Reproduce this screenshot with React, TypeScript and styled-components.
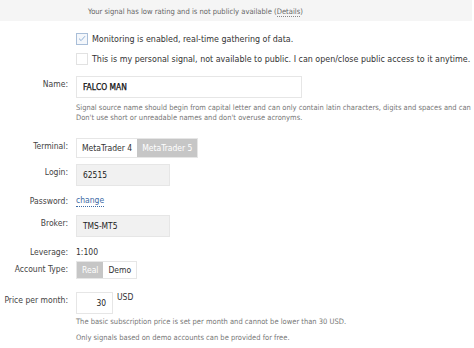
import React from 'react'
import styled, { createGlobalStyle } from 'styled-components'

const GlobalStyle = createGlobalStyle`
  body {
    margin: 0;
    background: #fff;
    font-family: 'DejaVu Sans Condensed', 'DejaVu Sans', sans-serif;
    color: #333;
    overflow: hidden;
  }
`

const App = () => {
  return (
    <>
      <GlobalStyle />
      <Page>
        <Banner>
          Your signal has low rating and is not publicly available (<BannerLink>Details</BannerLink>)
        </Banner>

        <Form>
          <CheckRow>
            <CheckBox $checked>
              <svg width="8" height="7" viewBox="0 0 8 7">
                <path d="M1 3.6 L3.1 5.6 L7 1.2" fill="none" stroke="#8fb0d6" strokeWidth="1" />
              </svg>
            </CheckBox>
            <span>Monitoring is enabled, real-time gathering of data.</span>
          </CheckRow>
          <CheckRow>
            <CheckBox />
            <span>This is my personal signal, not available to public. I can open/close public access to it anytime.</span>
          </CheckRow>

          <Row $top={4}>
            <Label $boxed>Name:</Label>
            <Input $width={226} $strong>FALCO MAN</Input>
          </Row>
          <Hint $top={5}>
            Signal source name should begin from capital letter and can only contain latin characters, digits and spaces and can
            <br />
            Don't use short or unreadable names and don't overuse acronyms.
          </Hint>

          <Row $top={15}>
            <Label $boxed>Terminal:</Label>
            <Toggle>
              <ToggleItem>MetaTrader 4</ToggleItem>
              <ToggleItem $active>MetaTrader 5</ToggleItem>
            </Toggle>
          </Row>

          <Row $top={6}>
            <Label $boxed>Login:</Label>
            <Input $width={94} $disabled>62515</Input>
          </Row>

          <Row $top={9}>
            <Label>Password:</Label>
            <Link>change</Link>
          </Row>

          <Row $top={8}>
            <Label $boxed>Broker:</Label>
            <Input $width={94} $disabled>TMS-MT5</Input>
          </Row>

          <Row $top={9}>
            <Label>Leverage:</Label>
            <Value>1:100</Value>
          </Row>

          <Row $top={3}>
            <Label $boxed>Account Type:</Label>
            <Toggle $height={18}>
              <ToggleItem $active>Real</ToggleItem>
              <ToggleItem>Demo</ToggleItem>
            </Toggle>
          </Row>

          <Row $top={13}>
            <Label $boxed>Price per month:</Label>
            <PriceWrap>
              <Input $width={37} $align="right">30</Input>
              <Currency>USD</Currency>
            </PriceWrap>
          </Row>
          <Hint $top={3}>The basic subscription price is set per month and cannot be lower than 30 USD.</Hint>
          <Hint $top={6}>Only signals based on demo accounts can be provided for free.</Hint>
        </Form>
      </Page>
    </>
  )
}

export default App

// Styled Components

const Page = styled.div`
  width: 474px;
  height: 348px;
  overflow: hidden;
`

const Banner = styled.div`
  width: 472px;
  height: 21px;
  box-sizing: border-box;
  padding-left: 88px;
  background: #f5f5f5;
  color: #666;
  font-size: 7.55px;
  line-height: 24px;
  white-space: nowrap;
`

const BannerLink = styled.span`
  border-bottom: 1px dotted #888;
`

const Form = styled.div`
  display: flex;
  flex-direction: column;
  padding-top: 11px;
`

const CheckRow = styled.div`
  display: flex;
  align-items: center;
  gap: 4px;
  height: 13px;
  margin-bottom: 7px;
  padding-left: 76px;
  font-size: 8.85px;
  color: #333;
  white-space: nowrap;
`

const CheckBox = styled.span<{ $checked?: boolean }>`
  width: 12px;
  height: 12px;
  box-sizing: border-box;
  flex-shrink: 0;
  display: flex;
  align-items: center;
  justify-content: center;
  border: 1px solid ${p => (p.$checked ? '#a9bed8' : '#e2e2e2')};
  background: ${p => (p.$checked ? '#f4f7fb' : '#fff')};
`

const Row = styled.div<{ $top: number }>`
  display: grid;
  grid-template-columns: 68px auto;
  column-gap: 8px;
  align-items: start;
  justify-content: start;
  margin-top: ${p => p.$top}px;
  font-size: 8.5px;
  line-height: 12px;
`

const Label = styled.span<{ $boxed?: boolean }>`
  padding-top: ${p => (p.$boxed ? 2 : 0)}px;
  text-align: right;
  color: #444;
  white-space: nowrap;
`

const Input = styled.div<{ $width: number; $disabled?: boolean; $strong?: boolean; $align?: string }>`
  width: ${p => p.$width}px;
  height: 22px;
  box-sizing: border-box;
  padding: 0 6px;
  display: flex;
  align-items: center;
  justify-content: ${p => (p.$align === 'right' ? 'flex-end' : 'flex-start')};
  border: 1px solid #e6e6e6;
  background: ${p => (p.$disabled ? '#f1f1f1' : '#fff')};
  color: ${p => (p.$strong ? '#111' : '#222')};
  font-size: 8.4px;
  -webkit-text-stroke: ${p => (p.$strong ? '0.25px #111' : '0')};
`

const Hint = styled.div<{ $top: number }>`
  margin-top: ${p => p.$top}px;
  padding-left: 76px;
  font-size: 7.5px;
  line-height: 10px;
  color: #777;
  white-space: nowrap;
`

const Toggle = styled.div<{ $height?: number }>`
  display: flex;
  border: 1px solid #e6e6e6;
  height: ${p => p.$height ?? 20}px;
  box-sizing: border-box;
`

const ToggleItem = styled.span<{ $active?: boolean }>`
  display: flex;
  align-items: center;
  padding: 0 5px;
  font-size: 8.5px;
  background: ${p => (p.$active ? '#c6c6c6' : '#fff')};
  color: ${p => (p.$active ? '#fff' : '#333')};
`

const Link = styled.span`
  justify-self: start;
  color: #3d6aa5;
  border-bottom: 1px dotted #3d6aa5;
  line-height: 11px;
`

const Value = styled.span`
  color: #333;
`

const PriceWrap = styled.div`
  display: flex;
  align-items: flex-start;
  gap: 4px;
`

const Currency = styled.span`
  font-size: 8.5px;
  color: #333;
  line-height: 11px;
`
